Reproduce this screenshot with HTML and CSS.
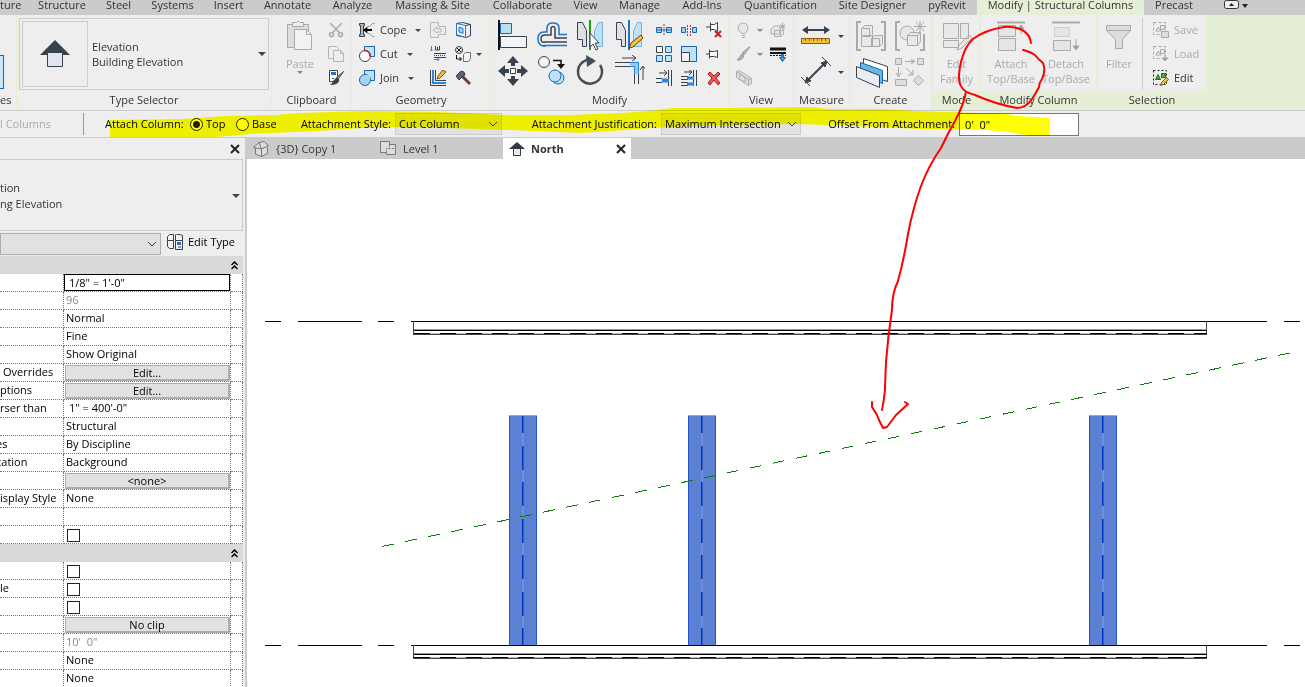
FILE: index.html
```html
<!DOCTYPE html>
<html lang="en">
<head>
<meta charset="utf-8">
<title>Modify | Structural Columns</title>
<link rel="stylesheet" href="styles.css">
</head>
<body>
<div class="app">
<nav class="tabs">
<a href="#">ture</a><a href="#">Structure</a><a href="#">Steel</a><a href="#">Systems</a><a href="#">Insert</a><a href="#">Annotate</a><a href="#">Analyze</a><a href="#">Massing &amp; Site</a><a href="#">Collaborate</a><a href="#">View</a><a href="#">Manage</a><a href="#">Add-Ins</a><a href="#">Quantification</a><a href="#">Site Designer</a><a href="#">pyRevit</a><a href="#" class="current">Modify | Structural Columns</a><a href="#">Precast</a>
<button class="minimize" aria-label="Minimize ribbon"><svg width="25" height="10"><rect x=".5" y=".5" width="14" height="8" rx="2" fill="#eee" stroke="#333"/><path d="M5 6h5L7.500 3z" fill="#222"/><path d="M18 4h6l-3 4z" fill="#222"/></svg></button>
</nav>

<div class="ribbon">
<section class="panel"><div class="body props"><button class="sel" aria-label="Properties"></button></div><h2 class="cut">es</h2></section>

<section class="panel"><div class="body"><button class="typesel"><span class="thumb"><svg width="30" height="28"><path d="M0 15 15 0l15 15z" fill="#38414e"/><path d="M7.500 12.500h15v14h-15z" fill="#e2e5ee" stroke="#38414e"/></svg></span><span class="typename">Elevation<br>Building Elevation</span><i class="caret wide"></i></button></div><h2>Type Selector</h2></section>

<section class="panel"><div class="body clip">
<button class="big off"><svg width="28" height="32" fill="#ddd" stroke="#aaa"><path d="M1.500 4.500h21v23h-21z"/><path d="M6.500 6.500v-4h4q1.500-3 3 0h4v4z" fill="#eee"/><path d="M8.500 9.500h12l5 5v15h-17z" fill="#f2f2f2"/><path d="M20.500 9.500v5h5" fill="none"/></svg><span>Paste</span><i class="caret dim"></i></button>
<div class="stack">
<button aria-label="Cut to clipboard"><svg class="s" fill="none" stroke="#aaa" stroke-width="1.500"><path d="M2 1l9 9M14 1l-9 9"/><circle cx="3.500" cy="12.500" r="2"/><circle cx="12.500" cy="12.500" r="2"/></svg></button>
<button aria-label="Copy to clipboard"><svg class="s" fill="#eee" stroke="#b5b5b5"><path d="M.5.500h8l2 2v10h-10z"/><path d="M5.500 4.500h7l3 3v8h-10zM12.500 4.500v3h3"/></svg></button>
<button aria-label="Match type"><svg class="s"><path d="M1.500.500h8v11h-8z" fill="#fff" stroke="#38414e"/><path d="M3 2h5v3H3z" fill="#2672c4"/><path d="M4 8.500h2" stroke="#38414e"/><path d="M15.500 1.500l-5 7-2-1z" fill="#a8b0ba" stroke="#38414e"/><path d="M8 8q4 0 3 3-1 4-9 4 3-2 3-4z" fill="#38414e"/></svg></button>
</div></div><h2>Clipboard</h2></section>

<section class="panel"><div class="body geo">
<button class="lab"><svg class="s"><path d="M.5 1.500h5v2h-1v9h1v2h-5v-2h1v-9h-1z" fill="#aeb6c0" stroke="#38414e"/><path d="M15.500 1.500h-2l-3 3h-2v3M15.500 14.500h-2l-3-3h-2v-3" fill="none" stroke="#8a93a0"/><path d="M4 8l4-3v2h5v2H8v2z" fill="#000"/></svg>Cope<i class="caret"></i></button>
<button aria-label="Split face"><svg class="s" fill="#ececec" stroke="#b5b5b5"><path d="M.5.500h8v4h7v8h-7v3h-8zM3 8l4-3v2h4v3H7v1z"/></svg></button>
<button aria-label="Wall opening"><svg class="s"><path d="M1.500 1.500l6-1 8 2v11l-4 2-10-2z" fill="#e8f0f8" stroke="#38414e"/><path d="M1.500 1.500v11l9 3v-12z" fill="#f8fbfd" stroke="#2672c4"/><path d="M4 5l4 1.500v5L4 10z" fill="#9ed2f1" stroke="#2672c4"/><path d="M10.500 3.500l5-1" stroke="#38414e"/></svg></button>
<button class="lab"><svg class="s"><path d="M5.500.500h10v10h-10z" fill="#bde2f5" stroke="#1766ae"/><circle cx="6" cy="10" r="5.500" fill="#fff" stroke="#38414e"/><path d="M5 4.500q6 0 6 6" fill="none" stroke="#d42020" stroke-width="1.500"/></svg>Cut<i class="caret"></i></button>
<button aria-label="Beam joins"><svg class="s"><path d="M1.500 0v5M0 3.500l1.500 1.500L3 3.500M4 13.500h5M7.500 12l1.500 1.500L7.500 15" fill="none" stroke="#2a86dd"/><path d="M5.500 0v4h2V1v3h2V0M4 7.500h12M4 11.500h12" fill="none" stroke="#38414e"/><path d="M4 9.500h12" stroke="#38414e" stroke-dasharray="1 1"/></svg></button>
<button class="more" aria-label="Unjoin"><svg class="s"><circle cx="4" cy="4" r="3.500" fill="#eee" stroke="#38414e"/><path d="M2 2l4 4M6 2 2 6M1.500 9v4h5M4.500 11l2 2-2 2" fill="none" stroke="#111"/><path d="M8.500 8.500l2-2h5v6l-2 3h-5z" fill="#f4f4f4" stroke="#68727f"/></svg><i class="caret"></i></button>
<button class="lab"><svg class="s"><path d="M5.500.500h10v10h-10z" fill="#bde2f5" stroke="#1766ae"/><circle cx="6" cy="10" r="5.500" fill="#a5d6f0" stroke="#1766ae"/><path d="M6 5h5v5H6z" fill="#a5d6f0"/></svg>Join<i class="caret"></i></button>
<button aria-label="Wall joins"><svg class="s"><path d="M.5 0v15.500H16M5.500 0v10.500H16" fill="none" stroke="#38414e"/><path d="M3 0v13h13" fill="none" stroke="#2a86dd" stroke-width="2"/><path d="M7 9l1-3 5-6 3 2-6 6z" fill="#f5c13d" stroke="#8a4a10"/></svg></button>
<button aria-label="Demolish"><svg class="s"><path d="M7 6l8 8" stroke="#713a30" stroke-width="3"/><path d="M1 6l5-5 3 1 1 3-2 1-1 1-3 3z" fill="#59626e" stroke="#38414e"/></svg></button>
</div><h2>Geometry</h2></section>

<section class="panel"><div class="body mod">
<div class="bigs">
<button aria-label="Align"><svg viewBox="0 0 30 32"><path d="M1 1v30" stroke="#111" stroke-width="2"/><path d="M2.500 4.500h11v10h-11z" fill="#b8dff4" stroke="#1766ae"/><path d="M2.500 17.500h26v11h-26z" fill="#f4f5f7" stroke="#38414e"/></svg></button>
<button aria-label="Offset"><svg viewBox="0 0 30 32" fill="none"><path d="M30 15.500H22V9q0-5-6-5t-6 5v4H7q-6 0-6 7 0 6 5 7h3" stroke="#1c75c8" stroke-width="1.500"/><path d="M30 19H18V9q-2-3-4 0v7H8q-4 0-4 4t4 3h22" stroke="#38414e" stroke-width="1.500"/><path d="M30 26.500H6" stroke="#1c75c8" stroke-width="1.500"/></svg></button>
<button aria-label="Mirror pick axis"><svg viewBox="0 0 30 32"><path d="M1.500 3.500h5l4 8v16h-4v-7h-5z" fill="#dde0e5" stroke="#38414e"/><path d="M26.500 3.500h-4l-4 8v16h8z" fill="#bde2f5" stroke="#79b4d8"/><path d="M14 1v30" stroke="#20a010" stroke-width="2"/><path d="M14 14v14l3-3 3 6 2-1-3-6h4z" fill="#fff" stroke="#38414e"/></svg></button>
<button aria-label="Mirror draw axis"><svg viewBox="0 0 30 32"><path d="M1.500 3.500h5l4 8v16h-4v-7h-5z" fill="#dde0e5" stroke="#38414e"/><path d="M26.500 3.500h-4l-4 8v16h8z" fill="#bde2f5" stroke="#79b4d8"/><path d="M14 1v30" stroke="#1c75c8" stroke-width="2"/><path d="M14 29l2-5 10-8 2 3-10 9z" fill="#f5c13d" stroke="#713a20"/></svg></button>
<button aria-label="Move"><svg viewBox="0 0 30 32" fill="#38414e"><path d="M15 1l-6 7h4v3h4V8h4zM15 31l-6-7h4v-3h4v3h4zM0 16l7-6v4h4v4H7v4zM30 16l-7-6v4h-4v4h4v4z"/><path d="M12.500 13.500h5v5h-5z" fill="#fff" stroke="#38414e"/></svg></button>
<button aria-label="Copy"><svg viewBox="0 0 30 32"><circle cx="7" cy="7" r="5.500" fill="#f3f3f5" stroke="#38414e"/><path d="M16 5.500h8V10" fill="none" stroke="#111" stroke-width="1.500"/><path d="M20 9h8l-4 5z" fill="#111"/><circle cx="21" cy="23" r="6" fill="#bde2f5" stroke="#1766ae"/><circle cx="18" cy="21" r="6" fill="#bde2f5" stroke="#1766ae"/></svg></button>
<button aria-label="Rotate"><svg viewBox="0 0 30 32"><path d="M24 10a12 12 0 1 1-7-5" fill="none" stroke="#484d53" stroke-width="2.500"/><path d="M10 0l10 6-9 6z" fill="#484d53"/></svg></button>
<button aria-label="Trim to corner"><svg viewBox="0 0 30 32" fill="none" stroke="#38414e"><path d="M0 7.500h15M0 11.500h15M19.500 17v12M23.500 17v12M7 3h13M17 0l4 3-4 3M28 25V11M25 15l3-4 3 4"/><path d="M15 9.500h6.500V19" stroke="#2a86dd" stroke-width="5"/><path d="M15 9.500h6.500V19" stroke="#9acbf2" stroke-width="3"/></svg></button>
</div>
<div class="smalls">
<button aria-label="Split"><svg class="s"><path d="M.5 5.500h5v5h-5zM10.500 5.500h5v5h-5z" fill="#9ed2f1" stroke="#1766ae"/><path d="M0 8h16" stroke="#1766ae"/><path d="M8 2v12" stroke="#c03030" stroke-dasharray="2 1"/></svg></button>
<button aria-label="Split with gap"><svg class="s"><path d="M.5 5.500h4v5h-4zM11.500 5.500h4v5h-4z" fill="#9ed2f1" stroke="#1766ae"/><path d="M6.500 3v11M9.500 3v11" stroke="#c03030" stroke-dasharray="2 1"/></svg></button>
<button aria-label="Unpin"><svg class="s"><path d="M0 5h4M4.500.500v9M4.500 2.500h4l3-2v9l-3-2h-4z" fill="#fff" stroke="#38414e"/><path d="M9 9l6 6M15 9l-6 6" stroke="#c42020" stroke-width="2"/></svg></button>
<button aria-label="Array"><svg class="s" fill="#bde2f5" stroke="#1766ae"><path d="M.5.500h6v6h-6z" fill="#fff" stroke="#38414e"/><path d="M9.500.500h6v6h-6zM.5 9.500h6v6h-6zM9.500 9.500h6v6h-6z"/></svg></button>
<button aria-label="Scale"><svg class="s"><path d="M.5.500h15v15h-15z" fill="#bde2f5" stroke="#1766ae"/><path d="M.5 6.500h8v9h-8z" fill="#f3f3f3" stroke="#38414e"/></svg></button>
<button aria-label="Pin"><svg class="s"><path d="M0 8h4M3.500 3.500v9M3.500 5.500h5l3-1v7l-3-1h-5z" fill="#fff" stroke="#38414e"/></svg></button>
<button aria-label="Trim single"><svg class="s" fill="none" stroke="#38414e"><path d="M3 3h8M8 0l3 3-3 3M12.500 0v16M15.500 0v16M0 8.500h6M0 12.500h6"/><path d="M6 10.500h7" stroke="#2a86dd" stroke-width="4"/></svg></button>
<button aria-label="Trim multiple"><svg class="s" fill="none" stroke="#38414e"><path d="M3 2h8M8 0l3 2-3 3M12.500 0v16M15.500 0v16M0 6.500h7M0 9.500h7M0 12.500h7M0 15.500h7"/><path d="M6 8h7M6 14h7" stroke="#2a86dd" stroke-width="3"/></svg></button>
<button aria-label="Delete"><svg class="s"><path d="M2 4l2-2 4 4 4-4 2 2-4 4 4 5-2 2-4-5-4 5-2-2 4-5z" fill="#f15b55" stroke="#b01818"/></svg></button>
</div></div><h2>Modify</h2></section>

<section class="panel"><div class="body view">
<button class="more dimmed" aria-label="Hide in view"><svg class="s" fill="#e8e8e8" stroke="#b0b0b0"><path d="M5.500 11.500Q1.500 8 2 5q1-4 5-4t5 4q.5 3-3 6.500zM5.500 13.500h4M6 15.500h3"/></svg><i class="caret"></i></button>
<button aria-label="Override graphics"><svg class="s" fill="#e8e8e8" stroke="#b0b0b0"><path d="M1 12V7l4-3h5v8zM4.500 8.500h6v6h-6zM10.500 8.500l3-1v5l-3 2"/><path d="M12.500.500v7M9.500 4.500h6M10 2l5 5M15 2l-5 5"/></svg></button>
<button class="more dimmed" aria-label="Displace"><svg class="s"><path d="M14 1l-6 8-2-2 7-6zM6 8l2 2q-2 5-7 4 3-2 3-4z" fill="#b0b0b0" stroke="#a0a0a0"/></svg><i class="caret"></i></button>
<button aria-label="Linework"><svg class="s"><path d="M0 3h16" stroke="#111" stroke-width="3"/><path d="M0 7h16" stroke="#111" stroke-width="2"/><path d="M0 9.500h16" stroke="#111" stroke-dasharray="2 1"/><path d="M11.500 8.500h2v3h2l-3 4-3-4h2z" fill="#2a9df0" stroke="#1766ae"/></svg></button>
<button class="dimmed" aria-label="Selection box"><svg class="s" fill="#ddd" stroke="#b0b0b0"><path d="M.5 1.500l3-1 12 8v5l-3 2-12-8zM.5 1.500l12 8v6M12.500 9.500l3-1M4 4v5l5 3V8z"/></svg></button>
</div><h2>View</h2></section>

<section class="panel"><div class="body measure">
<button aria-label="Measure"><svg width="30" height="32"><path d="M2 10h26" stroke="#38414e" stroke-width="2"/><path d="M1 10l6-4v8zM29 10l-6-4v8z" fill="#38414e"/><path d="M.5 18.500h28v5h-28z" fill="#f1be32" stroke="#945a10"/><path d="M4.500 18v3M8.500 18v3M12.500 18v3M16.500 18v3M20.500 18v3M24.500 18v3" stroke="#945a10"/></svg><i class="caret"></i></button>
<button aria-label="Aligned dimension"><svg width="30" height="32" stroke="#38414e"><path d="M5 26 25 6" stroke-width="2"/><path d="M0 21l9 9M21 1l9 9"/><path d="M4 27l2-6 4 4zM26 5l-6 2 4 4z" fill="#38414e"/></svg><i class="caret"></i></button>
</div><h2>Measure</h2></section>

<section class="panel"><div class="body create">
<button aria-label="Create assembly"><svg viewBox="0 0 30 32" fill="#e8e8e8" stroke="#aaa"><path d="M5 2H1v28h4M25 2h4v28h-4" fill="none" stroke-width="2"/><path d="M5.500 8.500l3-3h8v9l-2 2h-9zM5.500 16.500l2-1h9v11h-11zM15.500 18.500l3-3h8v8l-3 3h-8zM5.500 8.500h8v8M15.500 18.500h8v8"/></svg></button>
<button aria-label="Create group"><svg viewBox="0 0 30 32" fill="#e8e8e8" stroke="#aaa"><path d="M5 2H1v28h4M25 30h4V14" fill="none" stroke-width="2"/><circle cx="12" cy="13" r="7"/><path d="M12.500 15.500l3-3h10v9l-3 4h-10zM12.500 15.500h10v10M22.500 15.500l3-3"/><path d="M25 1v11M19 6.500h12M21 2l8 9M29 2l-8 9"/></svg></button>
<button aria-label="Create parts"><svg viewBox="0 0 30 32" stroke="#38414e"><path d="M7.500 2.500l24 8v15l-24-8z" fill="#fff"/><path d="M4.500 6.500l22 8v13l-22-8z" fill="#67b7e8" stroke="#1766ae"/><path d="M.5 10.500l23 9v12l-23-10z" fill="#e8ebf0"/></svg></button>
<button aria-label="Create similar"><svg viewBox="0 0 30 32" fill="#ddd" stroke="#aaa"><path d="M.5 2.500h6v6h-6zM22.500 2.500h6v6h-6zM.5 23.500h11v6H.5zM18.500 24.500l5-5 5 5-5 5zM10 5.500h9M16 3l4 2.500L16 8M3.500 11v8M1 17l2.500 4L6 17M11 12l7 7M18 14v5h-5"/></svg></button>
</div><h2>Create</h2></section>

<section class="panel ctx"><div class="body"><button class="big off"><svg width="30" height="32" fill="#e8e8e8" stroke="#aaa"><path d="M1.500 3.500h15v15h-15zM18.500 3.500h8v15h-8zM1.500 20.500h15v7h-15zM15 30l2-5 10-10 3 3-10 10z"/></svg><span>Edit<br>Family</span></button></div><h2>Mode</h2></section>

<section class="panel ctx"><div class="body pair">
<button class="big off"><svg width="30" height="32" fill="#e5e5e5" stroke="#aaa"><path d="M1 2.500h28" stroke-width="2"/><path d="M2.500 5.500h17v11h-17zM2.500 18.500h17v12h-17zM25 14V5"/><path d="M22 9l3-4 3 4z" fill="#999"/></svg><span>Attach<br>Top/Base</span></button>
<button class="big off"><svg width="30" height="32" fill="#e5e5e5" stroke="#aaa"><path d="M1 2.500h28" stroke-width="2"/><path d="M3.500 7.500h15v9h-15z" stroke="#ccc"/><path d="M2.500 20.500h17v10h-17zM25 19v10"/><path d="M22 26l3 4 3-4z" fill="#999"/></svg><span>Detach<br>Top/Base</span></button>
</div><h2>Modify Column</h2></section>

<section class="panel ctx"><div class="body select">
<button class="big off filter"><svg width="30" height="32" fill="#ddd" stroke="#aaa"><path d="M2.500 5.500h24v5l-8 9v9h-7v-9l-9-9zM2.500 10.500h24"/></svg><span>Filter</span></button>
<div class="stack words">
<button class="off"><svg class="s" fill="none" stroke="#aaa"><path d="M.5.500h12v12h-12z" stroke-dasharray="3 2"/><path d="M3 9l2-4 3 4zM7.500 3.500h4v4h-4z"/><path d="M8.500 9.500h7v6h-7z" fill="#ddd"/></svg>Save</button>
<button class="off"><svg class="s" fill="none" stroke="#aaa"><path d="M.5.500h12v12h-12z" stroke-dasharray="3 2"/><path d="M3 9l2-4 3 4zM7.500 3.500h4v4h-4z"/><path d="M12 8v5M9 12l3 3 3-3z" fill="#999"/></svg>Load</button>
<button><svg class="s" fill="none" stroke="#222"><path d="M.5.500h13v14h-13z" stroke-dasharray="2 2"/><path d="M2.500 9.500l2.500-5 2.500 5zM8.500 3.500h4v4h-4z" fill="#4daa34" stroke="#236d14"/><path d="M7.500 15.500l1-3 5-5 2 2-5 5z" fill="#f5c13d" stroke="#9a4a18"/></svg>Edit</button>
</div></div><h2>Selection</h2></section>
</div>

<form class="options">
<span class="mode">l Columns</span>
<span>Attach Column:</span>
<label class="radio"><input type="radio" name="end" checked>Top</label>
<label class="radio"><input type="radio" name="end">Base</label>
<label for="style">Attachment Style:</label>
<select id="style"><option>Cut Column</option></select>
<label for="just">Attachment Justification:</label>
<select id="just"><option>Maximum Intersection</option></select>
<label for="offset">Offset From Attachment:</label>
<input id="offset" type="text" value="0'  0&quot;">
</form>

<div class="work">
<aside class="palette">
<header><button class="close" aria-label="Close properties"><svg width="10" height="10"><path d="M1 1l8 8M9 1 1 9" stroke="#222" stroke-width="2"/></svg></button></header>
<button class="family"><span>tion<br>ng Elevation</span><i class="caret wide"></i></button>
<div class="pick"><select aria-label="Element filter"><option></option></select>
<button><svg class="s" fill="#f4f4f4" stroke="#38414e"><path d="M2.500.500h4v6h-6v-4zM9.500.500h4q2 0 2 3M.5 6.500h6v8h-4l-2-2zM8.500.500v6h7v-5"/><path d="M8.500 6.500h7v9h-7z"/><path d="M10 8h4v3h-4z" fill="#2672c4" stroke="none"/><path d="M11 13h3"/></svg>Edit Type</button></div>
<table>
<colgroup><col class="c1"><col class="c2"><col class="c3"></colgroup>
<tbody>
<tr class="group"><th colspan="2"></th><th><svg width="7" height="9" fill="none" stroke="#000"><path d="M.5 4l3-3 3 3M.5 8l3-3 3 3" stroke-width="1.500"/></svg></th></tr>
<tr><td></td><td class="edit"><input type="text" aria-label="View scale" value="1/8&quot; = 1'-0&quot;"></td><td></td></tr>
<tr><td></td><td class="ro">96</td><td></td></tr>
<tr><td></td><td>Normal</td><td></td></tr>
<tr><td></td><td>Fine</td><td></td></tr>
<tr><td></td><td>Show Original</td><td></td></tr>
<tr><td class="gap">Overrides</td><td class="act"><button>Edit...</button></td><td></td></tr>
<tr><td>ptions</td><td class="act"><button>Edit...</button></td><td></td></tr>
<tr><td>rser than</td><td class="ind">1" = 400'-0"</td><td></td></tr>
<tr><td></td><td>Structural</td><td></td></tr>
<tr><td class="scrolled">es</td><td>By Discipline</td><td></td></tr>
<tr><td class="scrolled">cation</td><td>Background</td><td></td></tr>
<tr><td></td><td class="act"><button>&lt;none&gt;</button></td><td></td></tr>
<tr><td>isplay Style</td><td>None</td><td></td></tr>
<tr><td></td><td></td><td></td></tr>
<tr><td></td><td><input type="checkbox" aria-label="Sun path"></td><td></td></tr>
<tr class="group"><th colspan="2"></th><th><svg width="7" height="9" fill="none" stroke="#000"><path d="M.5 4l3-3 3 3M.5 8l3-3 3 3" stroke-width="1.500"/></svg></th></tr>
<tr><td></td><td><input type="checkbox" aria-label="Crop view"></td><td></td></tr>
<tr><td>le</td><td><input type="checkbox" aria-label="Crop region visible"></td><td></td></tr>
<tr><td></td><td><input type="checkbox" aria-label="Annotation crop"></td><td></td></tr>
<tr><td></td><td class="act"><button>No clip</button></td><td></td></tr>
<tr><td></td><td class="ro">10'&nbsp; 0"</td><td></td></tr>
<tr><td></td><td>None</td><td></td></tr>
<tr><td></td><td>None</td><td></td></tr>
</tbody></table>
</aside>

<main>
<nav class="docs">
<a href="#"><svg class="s" fill="#ddd" stroke="#777"><path d="M2.500 7v6l6 2.500 6-3V6"/><path d="M.5 6.500 6 1.500l5-1 4.500 4-7 3.500zM8.500 8v7.500M6 1.500 8.500 8" /></svg>{3D} Copy 1</a>
<a href="#"><svg class="s" fill="#ddd" stroke="#777"><path d="M.5.500h9v3h6v10h-9v-2h-6z"/><path d="M9.500 3.500v4M6.500 11.500v-4h4M12 7.500h3" stroke-dasharray="2 1"/></svg>Level 1</a>
<a href="#" class="current"><svg class="s"><path d="M0 8l8-7 8 7z" fill="#303844"/><path d="M4.500 7.500h7v7h-7z" fill="#e7eaf0" stroke="#303844"/></svg>North<button class="close" aria-label="Close view"><svg width="10" height="10"><path d="M1 1l8 8M9 1 1 9" stroke="#222" stroke-width="2"/></svg></button></a>
</nav>
<svg class="drawing" viewBox="247 159 1058 528" preserveAspectRatio="xMinYMin meet" fill="none" shape-rendering="crispEdges">
<defs>
<g id="beam"><path d="M414.500 1.500h792" stroke="#555"/><path d="M265 1.500h16M298 1.500h64M378 1.500h16M411 1.500h856M1284 1.500h16" stroke="#000"/><path d="M413.500 1v14M1206.500 1v14M413 14.500h794" stroke="#444"/><path d="M414 9.500h793" stroke="#999"/><path d="M414 10.500h793" stroke="#000"/><path d="M414 13.500h793" stroke="#bbb"/><path d="M414 13.500h793" stroke="#000" stroke-dasharray="16 10"/></g>
<g id="col"><path d="M0 0h28v230H0z" fill="#5c80d4"/><path d="M.5 0v230M27.500 0v230" stroke="#2454c6"/><path d="M0 .5h28" stroke="#8fa8e2"/><path d="M14 1v229" stroke="#708edb" stroke-width="2"/><path d="M14.500 1v229" stroke="#2f5dc9" stroke-dasharray="24 12.500" stroke-dashoffset="7"/><path d="M13.500 1v229" stroke="#0038bd" stroke-dasharray="24 12.500" stroke-dashoffset="7"/></g>
</defs>
<use href="#beam" y="320"/><use href="#beam" y="644"/>
<use href="#col" x="509" y="415"/><use href="#col" x="688" y="415"/><use href="#col" x="1089" y="415"/>
<path d="M382 546.500 1292 352.500" stroke="#0b7d0b" stroke-dasharray="12 11.500"/>
</svg>
</main>
</div>

<svg class="marks" aria-hidden="true" width="1305" height="687">
<path class="hl" d="M110 120l73-1 42-3 50-1 25-2 65-2 72 1 70 3 62 0 54-2 36-3 13-2h53l85-1 20 2h55l30 2 93 3 10 2 32 2v18h-20l-21-4-22-2-67-1-66-3-57-2-110 2-33 2-73 5-70-3-100-3-50 1-43 3-67 3-36 3H110z"/>
<path class="pen" d="M1031 43q-1-9-9-13-8-4-18-3-19 3-31 12-8 7-12 23-4 18 0 24 2 6 14 9 20 9 42 13 9 0 15-9 4-6 7-12 0-4 3-8 4-8 1-16-5-4-8-8-4-3-12-5"/>
<path class="pen" d="M966 92q-2 12-11 29-8 14-14 27-12 17-20 38-8 22-13 48-4 25-10 47-6 12-6 29-4 26-6 52-1 24-1 28-1 10-3 20M872 402v5l5 8 2 5 4 8 4-1 9-12 12-11-3-2"/>
</svg>
</div>
</body>
</html>
```
FILE: styles.css
```css
* { box-sizing: border-box; }
body { margin: 0; font: 11px/16px "Open Sans", "Noto Sans", sans-serif; color: #333; background: #fff; }
a { color: inherit; text-decoration: none; }
button, input, select { font: inherit; color: inherit; margin: 0; }
button { padding: 0; border: 0; background: none; }
svg { display: block; flex: none; }
.s { width: 16px; height: 16px; }
.app { position: relative; display: flex; flex-direction: column; height: 100vh; overflow: hidden; }
.caret { flex: none; border: 3px solid transparent; border-top-color: #444; border-bottom: 0; }
.caret.wide { border-width: 4px; border-bottom: 0; }
.caret.dim, .dimmed .caret { border-top-color: #888; }
.off { color: #aaa; }

.tabs { flex: none; display: grid; grid-template-columns: 28px 68px 45px 63px 49px 69px 61px 99px 81px 45px 63px 62px 95px 89px 60px 167px 60px 1fr; height: 15px; background: #cbcbcb; line-height: 10px; white-space: nowrap; }
.tabs a { text-align: center; }
.tabs a:first-child { text-align: left; }
.tabs .current { background: #e5efd6; }
.minimize { justify-self: start; align-self: start; padding-left: 20px; }

.ribbon { flex: none; display: grid; grid-template-columns: 17px 255px 80px 139px 238px 65px 56px 82px 47px 117px 110px; height: 96px; background: linear-gradient(90deg, #eee 932px, #e5efd6 932px); border-bottom: 1px solid #cbcbcb; }
.panel { display: flex; flex-direction: column; border-right: 1px solid #e5efd6; }
.panel h2 { margin: 0; font-size: 11px; font-weight: 400; line-height: 18px; text-align: center; }
.panel h2.cut { text-align: left; }
.body { height: 76px; background: #eee; }
.ctx { margin-left: 2px; border-right: 0; }
.props { padding-top: 40px; }
.sel { width: 4px; height: 34px; background: #cce4f7; border: 1px solid #1766ae; border-left: 0; }
.typesel { display: flex; align-items: center; width: 250px; height: 72px; margin: 3px 2px; padding: 2px 2px; border: 1px solid #ccc; text-align: left; line-height: 15px; }
.thumb { display: grid; place-items: center; width: 66px; height: 66px; border: 1px solid #ccc; }
.typename { flex: 1; padding-left: 4px; }
.clip { display: flex; }
.big { display: flex; flex-direction: column; align-items: center; line-height: 15px; width: 100%; padding-top: 5px; text-align: center; }
.big span { padding-top: 4px; }
.clip .big { width: 56px; }
.stack { display: grid; grid-template-rows: repeat(3, 16px); gap: 8px; padding-top: 7px; align-content: start; }
.geo { display: grid; grid-template: repeat(3, 16px) / 71px 25px 34px; gap: 8px 0; padding: 7px 0 0 7px; }
.lab, .more { display: flex; align-items: center; gap: 5px; }
.lab .caret { margin-left: 4px; }
.mod { display: flex; justify-content: space-between; padding: 4px 6px 0 7px; }
.bigs { display: grid; grid-template: 32px 32px / repeat(4, 30px); gap: 4px 9px; }
.bigs svg { width: 30px; height: 32px; }
.smalls { display: grid; grid-template: repeat(3, 16px) / repeat(3, 16px); gap: 8px 9px; padding-top: 3px; }
.view { display: grid; grid-template: repeat(3, 16px) / 26px 16px; gap: 8px; padding: 7px 0 0 7px; }
.measure { padding: 5px 0 0 7px; display: grid; align-content: start; gap: 4px; }
.measure button { display: flex; align-items: center; gap: 7px; }
.create { display: grid; grid-template: 32px 32px / 30px 30px; gap: 4px 9px; padding: 5px 0 0 6px; }
.create svg { width: 30px; height: 32px; overflow: visible; }
.pair { display: grid; grid-template-columns: 55px 55px; justify-content: center; }
.select { display: flex; }
.select .filter { width: 42px; }
.words { margin: 3px 0 0 2px; padding: 4px 0 0 10px; border-left: 1px solid #ccc; height: 72px; }
.words button { display: flex; align-items: center; gap: 5px; }

.options { flex: none; display: grid; grid-template-columns: 84px 102px 46px 62px 101px 107px 159px 140px 158px 120px; align-items: center; height: 27px; margin: 0; background: #eee; border-bottom: 1px solid #cbcbcb; color: #000; white-space: nowrap; }
.options > * { justify-self: start; }
.options > span:nth-child(2) { padding-left: 21px; }
.options > label[for] { justify-self: end; padding-right: 4px; }
.options .mode { width: 84px; color: #aaa; line-height: 22px; border-right: 1px solid #999; }
.radio { display: flex; align-items: center; gap: 3px; padding-left: 4px; }
.radio input { appearance: none; width: 13px; height: 13px; border: 1px solid #222; border-radius: 50%; background: #fff; }
.radio input:checked { background: radial-gradient(circle, #222 3px, #fff 4px); }
select { appearance: none; border: 1px solid #adadad; border-radius: 0; height: 22px; padding: 0 16px 0 3px; background: #e1e1e1 url("data:image/svg+xml,%3Csvg xmlns='http://www.w3.org/2000/svg' width='10' height='6'%3E%3Cpath d='M1 1l4 4 4-4' fill='none' stroke='%23444'/%3E%3C/svg%3E") no-repeat right 3px center; }
.options select { width: 100%; border-color: #ccc; }
#offset { width: 120px; height: 23px; border: 1px solid #777; padding: 0 5px; background: #fff; white-space: pre; }

.work { flex: 1; min-height: 0; display: grid; grid-template-columns: 247px 1fr; }
.palette { background: #eee; border-right: 2px solid #cbcbcb; overflow: hidden; color: #000; }
.palette header { display: flex; justify-content: flex-end; align-items: center; height: 21px; padding-right: 5px; }
.family { display: flex; justify-content: space-between; align-items: center; width: 243px; height: 72px; padding: 2px 2px 0 0; border: 1px solid #ccc; border-left: 0; color: #333; text-align: left; }
.pick { display: flex; align-items: center; gap: 6px; height: 25px; }
.pick select { width: 161px; }
.pick button { display: flex; align-items: center; gap: 5px; padding-bottom: 3px; }
table { width: 243px; table-layout: fixed; border-collapse: separate; border-spacing: 0; background: #fff; line-height: 15px; white-space: nowrap; }
.c1 { width: 64px; }
.c3 { width: 12px; }
td, th { height: 18px; padding: 0; }
td { border-right: 1px dotted #777; border-bottom: 1px dotted #777; overflow: hidden; vertical-align: top; }
td:nth-child(2) { padding-left: 2px; }
td.gap { padding-left: 3px; }
td.scrolled { text-indent: -4px; }
td.ind { padding-left: 5px; }
td.ro { color: #888; }
.group th { background: #dadada; text-align: left; }
td.edit, td.act { padding: 0; }
.edit input { display: block; width: 166px; height: 17px; border: 1px solid #000; padding: 0 4px; background: #fff; }
.act button { display: block; width: 165px; height: 16px; margin: 1px 0 0 1px; background: #e1e1e1; border: 1px solid #adadad; border-right-width: 2px; border-bottom-width: 2px; line-height: 13px; }
td input[type=checkbox] { appearance: none; display: block; width: 13px; height: 13px; margin: 3px 0 0 1px; border: 1px solid #222; background: #fff; }

main { display: flex; flex-direction: column; min-width: 0; }
.docs { flex: none; display: grid; grid-template-columns: 127px 129px 128px 1fr; height: 21px; background: #cbcbcb; }
.docs a { display: flex; align-items: center; gap: 7px; padding-left: 6px; }
.docs .current { background: #fff; font-weight: 700; gap: 6px; margin-right: 0; }
.docs .close { margin: 0 5px 0 auto; }
.drawing { width: 100%; }
.marks { position: absolute; top: 0; left: 0; pointer-events: none; }
.hl { fill: #ff0; mix-blend-mode: multiply; }
.pen { fill: none; stroke: #f00; stroke-width: 2; stroke-linecap: round; stroke-linejoin: round; }
```
